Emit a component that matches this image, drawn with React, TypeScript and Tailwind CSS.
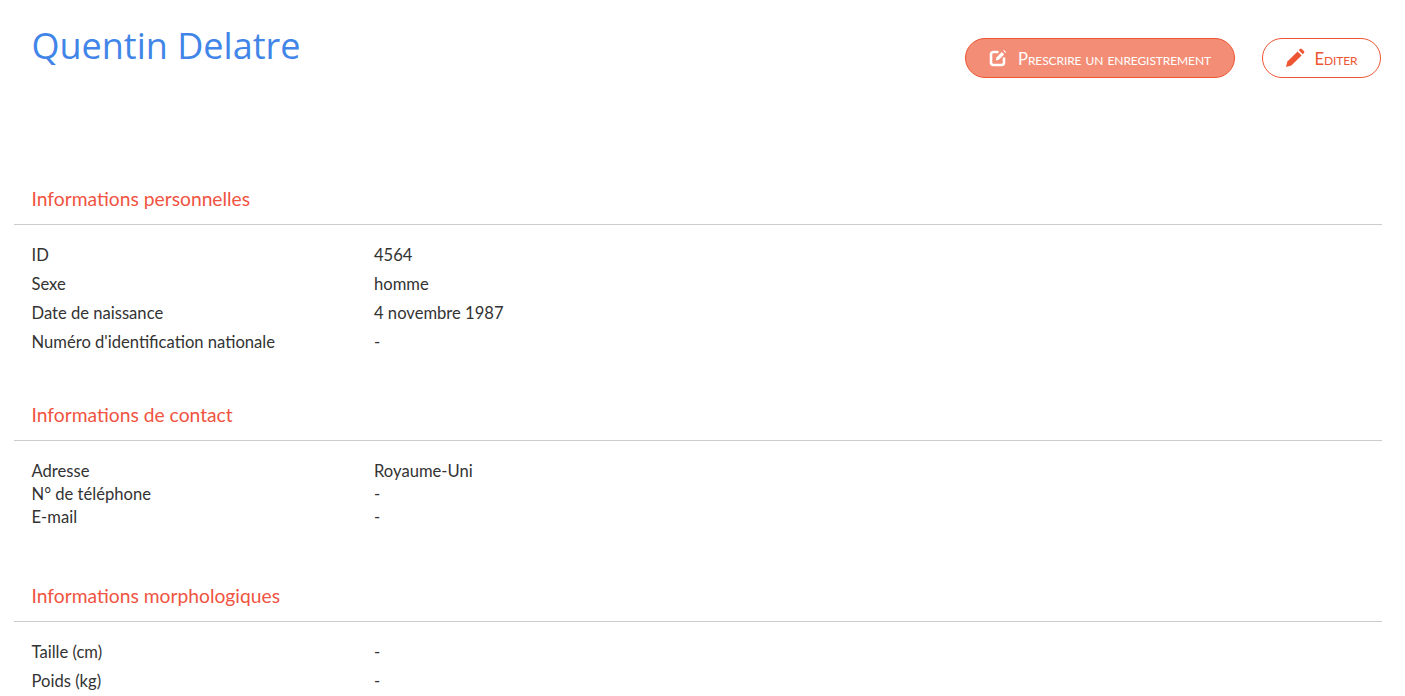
const sections = [
    {
        title: "Informations personnelles",
        rowClass: "h-[29px]",
        bodyClass: "pt-4 pb-[29px]",
        rows: [
            ["ID", "4564"],
            ["Sexe", "homme"],
            ["Date de naissance", "4 novembre 1987"],
            ["Numéro d'identification nationale", "-"],
        ],
    },
    {
        title: "Informations de contact",
        rowClass: "h-[23px]",
        bodyClass: "pt-[19px] pb-[38px]",
        rows: [
            ["Adresse", "Royaume-Uni"],
            ["N° de téléphone", "-"],
            ["E-mail", "-"],
        ],
    },
    {
        title: "Informations morphologiques",
        rowClass: "h-[29px]",
        bodyClass: "pt-4",
        rows: [
            ["Taille (cm)", "-"],
            ["Poids (kg)", "-"],
        ],
    },
];

function PrescribeIcon() {
    return (
        <svg viewBox="0 0 18 18" className="w-[18px] h-[18px]" fill="none">
            <path d="M9.5 3H4.5A2.5 2.5 0 0 0 2 5.5v8A2.5 2.5 0 0 0 4.5 16h8a2.5 2.5 0 0 0 2.5-2.5V8.5" stroke="white" strokeWidth="2.6" />
            <path d="M6.8 11.4 7.4 8.4 12.8 3l2.4 2.4-5.4 5.4z" fill="white" />
            <path d="M14.2 1.8 15 1l2.2 2.2-.8.8z" fill="white" />
        </svg>
    );
}

function PencilIcon() {
    return (
        <svg viewBox="0 0 20 20" className="w-5 h-5" fill="#ee5533">
            <path d="M1 19 2.4 13.6 12.6 3.4 16.6 7.4 6.4 17.6z" />
            <path d="M13.8 2.2 15 1a1.2 1.2 0 0 1 1.7 0L19 3.3a1.2 1.2 0 0 1 0 1.7l-1.2 1.2z" />
        </svg>
    );
}

export default function App() {
    return (
        <div className="h-[696px] overflow-hidden bg-white text-[#333333] font-['Lato',sans-serif]">
            <div className="w-[1368px] ml-[14px] text-[16.6px]">
                <div className="flex justify-between h-[170px]">
                    <h1 className="ml-[17.5px] mt-[21px] font-['Open_Sans',sans-serif] text-[36px] leading-[50px] text-[#4285e8]">
                        Quentin Delatre
                    </h1>
                    <div className="flex items-start gap-[27px] mt-[38px] mr-[1px] tracking-[-0.1px] [font-variant-caps:small-caps]">
                        <button className="flex items-center justify-center gap-[11px] w-[270px] h-10 rounded-full border border-[#ee5533] bg-[#f38d75] text-white">
                            <PrescribeIcon />
                            <span className="pt-[2px]">Prescrire un enregistrement</span>
                        </button>
                        <button className="flex items-center justify-center gap-[9px] w-[119px] h-10 rounded-full border border-[#ee5533] bg-white text-[#ee5533]">
                            <PencilIcon />
                            <span className="pt-[2px]">Editer</span>
                        </button>
                    </div>
                </div>
                {sections.map((section) => (
                    <section key={section.title}>
                        <h2 className="h-[55px] pl-[17.5px] pt-[14px] border-b border-[#cccccc] text-[19.25px] leading-[30px] text-[#f0533f]">
                            {section.title}
                        </h2>
                        <div className={section.bodyClass}>
                            {section.rows.map(([label, value]) => (
                                <div key={label} className={`flex items-center pl-[17.5px] ${section.rowClass}`}>
                                    <div className="w-[342.5px]">{label}</div>
                                    <div>{value}</div>
                                </div>
                            ))}
                        </div>
                    </section>
                ))}
            </div>
        </div>
    );
}
